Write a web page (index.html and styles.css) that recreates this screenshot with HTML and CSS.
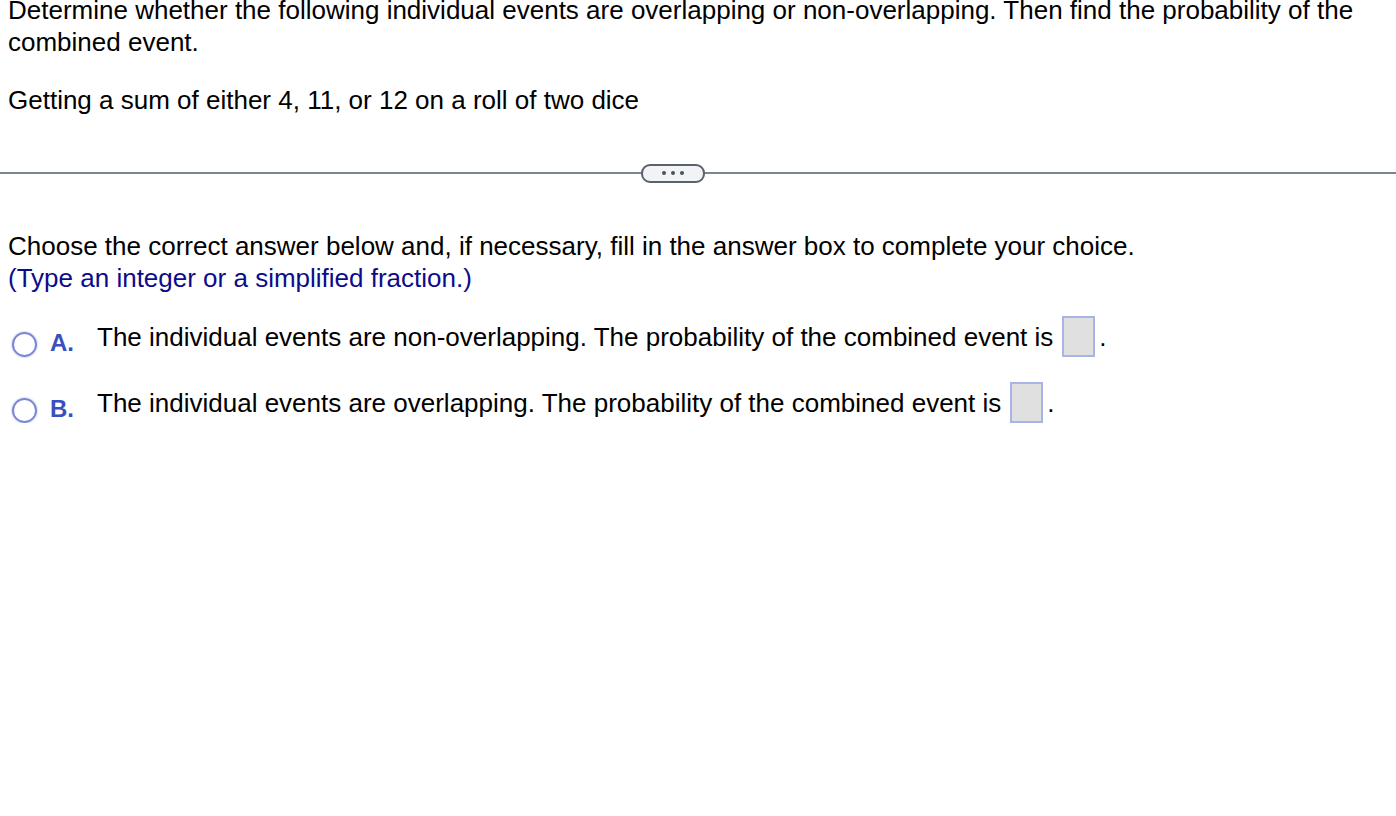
FILE: index.html
```html
<!DOCTYPE html>
<html>
<head>
<meta charset="utf-8">
<link rel="stylesheet" href="styles.css">
</head>
<body>
<div class="page">
  <div class="question">
    <p class="prompt">Determine whether the following individual events are overlapping or non-overlapping. Then find the probability of the combined event.</p>
    <p class="event">Getting a sum of either 4, 11, or 12 on a roll of two dice</p>
  </div>
  <div class="divider">
    <span class="pill"><i></i><i></i><i></i></span>
  </div>
  <div class="answer">
    <p class="instr">Choose the correct answer below and, if necessary, fill in the answer box to complete your choice.</p>
    <p class="hint">(Type an integer or a simplified fraction.)</p>
    <div class="options">
      <div class="option">
        <span class="radio"></span>
        <span class="letter">A.</span>
        <span class="text">The individual events are non-overlapping. The probability of the combined event is <span class="box"></span>.</span>
      </div>
      <div class="option">
        <span class="radio"></span>
        <span class="letter">B.</span>
        <span class="text">The individual events are overlapping. The probability of the combined event is <span class="box"></span>.</span>
      </div>
    </div>
  </div>
</div>
</body>
</html>
```
FILE: styles.css
```css
html, body {
  margin: 0;
  padding: 0;
  background: #fff;
}
body {
  font-family: "Liberation Sans", Arial, sans-serif;
  font-size: 26px;
  color: #000;
}
.page {
  margin-top: -6px;
}
p { margin: 0; }
.question {
  padding: 0 8px;
  line-height: 32px;
}
.event {
  margin-top: 26px;
}
.divider {
  margin-top: 47px;
  position: relative;
  height: 20px;
  display: flex;
  align-items: center;
  justify-content: center;
  padding-right: 51px;
}
.divider::before {
  content: "";
  position: absolute;
  left: 0;
  right: 0;
  top: 9px;
  height: 2px;
  background: #7b8591;
}
.pill {
  position: relative;
  width: 60px;
  height: 15px;
  border: 2px solid #59636e;
  border-radius: 9px;
  background: #f1f3f6;
  display: flex;
  align-items: center;
  justify-content: center;
  gap: 5px;
}
.pill i {
  width: 4px;
  height: 4px;
  border-radius: 50%;
  background: #4b525a;
}
.answer {
  padding: 0 8px;
  margin-top: 47px;
  line-height: 32px;
}
.hint {
  color: #0c0c8a;
}
.options {
  margin-top: 22px;
  display: flex;
  flex-direction: column;
  gap: 25px;
}
.option {
  display: flex;
  align-items: flex-start;
}
.radio {
  flex: none;
  width: 25px;
  height: 25px;
  border: 2px solid #7b87d6;
  border-radius: 50%;
  box-sizing: border-box;
  margin: 16px 13px 0 4px;
  box-shadow: 0 0 1px 1px rgba(123,135,214,0.25);
}
.letter {
  flex: none;
  color: #3a4fbf;
  font-weight: bold;
  font-size: 24px;
  line-height: 24px;
  width: 47px;
  margin-top: 15px;
}
.text {
  display: flex;
  align-items: center;
  white-space: nowrap;
}
.box {
  display: inline-block;
  width: 33px;
  height: 41px;
  box-sizing: border-box;
  border: 2px solid #a6b5e6;
  background: #e0e0e0;
  margin: 0 4px 0 9px;
}
```
